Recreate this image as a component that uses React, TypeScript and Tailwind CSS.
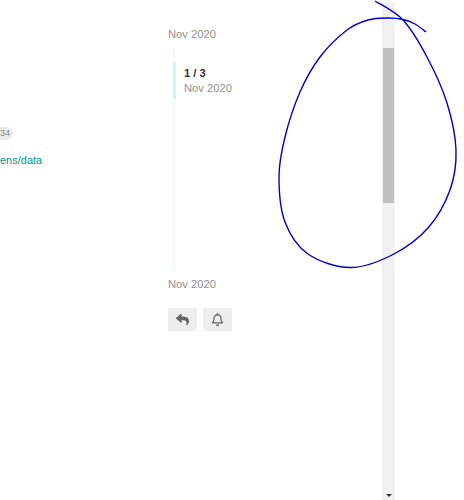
import { FaReply, FaRegBell } from "react-icons/fa";

// hand traced from the screenshot
const curve: [number, number][] = [
  [426, 32], [415, 24], [403, 19.5], [388, 18], [368, 20], [347, 30], [320, 57], [300, 92], [285, 137], [279, 177],
  [285, 222], [308, 254], [350, 267.5], [392, 255], [428, 228], [450, 190], [456, 150], [447, 103], [427, 57], [403, 20], [375, 1],
];

function toPath(pts: [number, number][]) {
  let d = `M${pts[0][0]} ${pts[0][1]}`;
  for (let i = 0; i < pts.length - 1; i++) {
    const p0 = pts[Math.max(i - 1, 0)];
    const p1 = pts[i];
    const p2 = pts[i + 1];
    const p3 = pts[Math.min(i + 2, pts.length - 1)];
    d += ` C${p1[0] + (p2[0] - p0[0]) / 6} ${p1[1] + (p2[1] - p0[1]) / 6} ${p2[0] - (p3[0] - p1[0]) / 6} ${p2[1] - (p3[1] - p1[1]) / 6} ${p2[0]} ${p2[1]}`;
  }
  return d;
}

function Scrollbar() {
  return (
    <div className="w-[13px] h-[497px] mt-[3px] ml-[150px] shrink-0 bg-[#f1f1f1] flex flex-col items-center">
      <div className="w-[11px] h-[155px] mt-[45px] bg-[#c0c0c0]" />
      <div className="mt-auto mb-[3px] w-0 h-0 border-x-[3px] border-x-transparent border-t-[3px] border-t-[#333]" />
    </div>
  );
}

export default function App() {
  return (
    <div className="relative w-[464px] h-[500px] overflow-hidden bg-white flex antialiased font-['Liberation_Sans',Arial,sans-serif]">
      <div className="w-[168px] shrink-0 pt-[127px] overflow-hidden">
        <div className="w-[22px] h-[13px] -ml-[9px] rounded-full bg-[#ececec] text-[9px] leading-[13px] text-[#888] text-right pr-[3px]">
          34
        </div>
        <div className="mt-[12px] text-[11px] leading-[16px] text-[#009a90]">ens/data</div>
      </div>

      <div className="w-[64px] shrink-0 pt-[27px] text-[11.2px] leading-[14px] text-[#919191]">
        <div>Nov 2020</div>
        <div className="ml-[5px] mt-[7px] h-[224px] w-[2px] bg-[#eefdfd] relative">
          <div className="absolute left-0 top-[14px] w-[3px] h-[37px] bg-[#c8f8f8]" />
          <div className="absolute left-[11px] top-[18px] w-[60px]">
            <div className="font-bold text-[#333]">1 / 3</div>
            <div className="mt-[1px]">Nov 2020</div>
          </div>
        </div>
        <div className="mt-[5px]">Nov 2020</div>
        <div className="mt-[17px] flex gap-[6px]">
          <button className="w-[29px] h-[23px] shrink-0 bg-[#eeeeee] flex items-center justify-center text-[#666]">
            <FaReply size={13} />
          </button>
          <button className="w-[29px] h-[23px] shrink-0 bg-[#eeeeee] flex items-center justify-center text-[#666]">
            <FaRegBell size={13} />
          </button>
        </div>
      </div>

      <Scrollbar />

      <svg className="absolute inset-0 pointer-events-none" width="464" height="500" viewBox="0 0 464 500" fill="none">
        <path d={toPath(curve)} stroke="#0000cc" strokeWidth="1.4" />
      </svg>
    </div>
  );
}
